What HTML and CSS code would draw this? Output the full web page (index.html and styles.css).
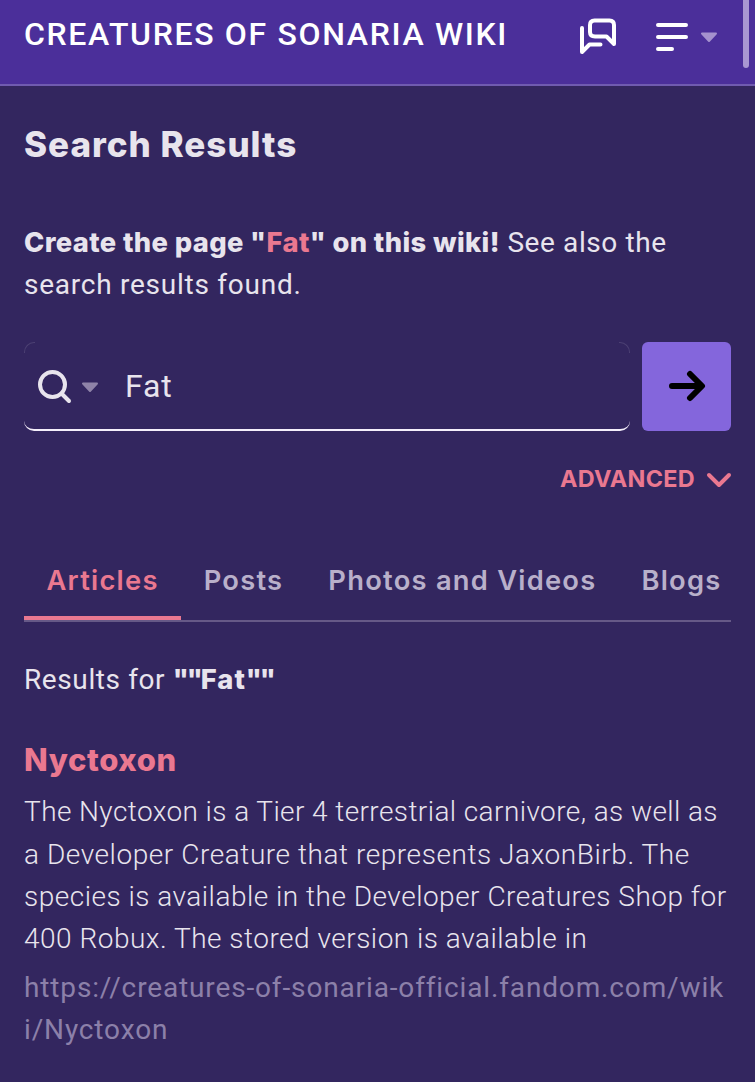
FILE: index.html
```html
<!DOCTYPE html>
<html lang="en">
<head>
    <meta charset="UTF-8">
    <meta name="viewport" content="width=device-width, initial-scale=1.0">
    <title>Search Results | Creatures of Sonaria Wiki</title>
    <link rel="stylesheet" href="styles.css">
</head>
<body>
    <header class="wiki-header">
        <a class="wiki-name" href="#">CREATURES OF SONARIA WIKI</a>
        <div class="wiki-tools">
            <svg class="icon-discuss" viewBox="0 0 38 38">
                <path d="M3 10V34L10.500 26.500H21.500"/>
                <path d="M15.500 2.500H30.500Q35 2.500 35 7V26L27.500 18.500H16Q11 18.500 11 14V7Q11 2.500 15.500 2.500Z"/>
            </svg>
            <svg class="icon-menu" viewBox="0 0 34 30">
                <path d="M3 3H31M3 15H31M3 27H17"/>
            </svg>
            <svg class="caret" viewBox="0 0 18 11">
                <path d="M2 1.500H16L9 9Z"/>
            </svg>
        </div>
        <div class="scroll-thumb"></div>
    </header>

    <main class="content">
        <h1>Search Results</h1>
        <p class="create-page">
            <span class="line line-create"><b>Create the page "<a href="#">Fat</a>" on this wiki!</b> See also the</span>
            <span class="line">search results found.</span>
        </p>

        <form class="search-form">
            <div class="search-box">
                <svg class="icon-search" viewBox="0 0 34 34">
                    <circle cx="14.500" cy="14.500" r="12.500"/>
                    <path d="M23.500 23.500L31 31"/>
                </svg>
                <svg class="caret" viewBox="0 0 18 11">
                    <path d="M2 1.500H16L9 9Z"/>
                </svg>
                <span class="search-text">Fat</span>
            </div>
            <button class="search-button" type="button" aria-label="Search">
                <svg viewBox="0 0 38 32">
                    <path d="M4 16H33M22 4L34 16L22 28"/>
                </svg>
            </button>
        </form>

        <a class="advanced" href="#">
            <span>ADVANCED</span>
            <svg viewBox="0 0 26 16">
                <path d="M3 3L13 13L23 3"/>
            </svg>
        </a>

        <nav class="tabs">
            <a class="tab active" href="#">Articles</a>
            <a class="tab" href="#">Posts</a>
            <a class="tab" href="#">Photos and Videos</a>
            <a class="tab" href="#">Blogs</a>
        </nav>

        <p class="results-for">Results for <b>""<span class="query">Fat</span>""</b></p>

        <article class="result">
            <h2><a href="#">Nyctoxon</a></h2>
            <p class="result-text">
                <span class="line line-1">The Nyctoxon is a Tier 4 terrestrial carnivore, as well as</span>
                <span class="line line-2">a Developer Creature that represents JaxonBirb. The</span>
                <span class="line">species is available in the Developer Creatures Shop for</span>
                <span class="line">400 Robux. The stored version is available in</span>
            </p>
            <a class="result-url" href="#">
                <span class="line">https://creatures-of-sonaria-official.fandom.com/wik</span>
                <span class="line">i/Nyctoxon</span>
            </a>
        </article>
    </main>
</body>
</html>
```
FILE: styles.css
```css
* {
    box-sizing: border-box;
}

body {
    margin: 0;
    height: 1082px;
    overflow: hidden;
    background-color: #33265f;
    color: #e8e4ed;
    font-family: Roboto, sans-serif;
    font-size: 28px;
    line-height: 42.3px;
}

a {
    color: #ea7890;
    text-decoration: none;
}

svg {
    display: block;
    flex: none;
    fill: none;
    stroke: currentColor;
    stroke-linecap: round;
    stroke-linejoin: round;
}

h1, h2, p {
    margin: 0;
}

h1, h2, b, .advanced, .tab {
    font-family: Inter, sans-serif;
}

b {
    font-size: 27.3px;
    font-weight: 800;
    line-height: 1;
}

.line {
    display: block;
    white-space: nowrap;
}

/* header */
.wiki-header {
    position: relative;
    display: flex;
    justify-content: space-between;
    height: 86px;
    padding: 13px 37px 0 24px;
    background-color: #4b2f9a;
    border-bottom: 2px solid #705bb0;
    color: #fff;
}

.wiki-name {
    color: #fff;
    font-size: 32px;
    font-weight: 500;
    letter-spacing: 1.65px;
    white-space: nowrap;
}

.wiki-tools {
    display: flex;
    align-items: center;
    height: 47px;
}

.icon-discuss {
    width: 38px;
    height: 38px;
    margin-right: 38px;
    stroke-width: 4;
}

.icon-menu {
    width: 34px;
    height: 30px;
    margin-right: 11px;
    stroke-width: 4;
}

.caret {
    width: 18px;
    height: 11px;
    color: #a592ce;
    fill: currentColor;
    stroke-width: 2;
}

.wiki-tools .caret {
    margin-top: 2px;
}

.scroll-thumb {
    position: absolute;
    top: 0;
    right: 6px;
    width: 6px;
    height: 68px;
    border-radius: 0 0 3px 3px;
    background-color: #a997d2;
}

/* page */
.content {
    padding: 36px 24px 0;
}

h1 {
    font-size: 35px;
    font-weight: 800;
    letter-spacing: 1px;
    line-height: 44px;
}

.create-page {
    margin-top: 56px;
    letter-spacing: 0.75px;
}

.line-create {
    letter-spacing: 0.6px;
}

.create-page b {
    letter-spacing: 0.38px;
}

.search-form {
    display: flex;
    gap: 12px;
    margin-top: 35.4px;
}

.search-box {
    position: relative;
    display: flex;
    align-items: center;
    flex: 1;
    height: 89px;
    padding: 2px 0 0 14px;
    border-bottom: 2px solid #f5effb;
    border-radius: 10px;
}

/* faint top corners of the field */
.search-box::before,
.search-box::after {
    content: "";
    position: absolute;
    top: 0;
    width: 10px;
    height: 10px;
    border-top: 1px solid #4c4073;
}

.search-box::before {
    left: 0;
    border-left: 1px solid #4c4073;
    border-top-left-radius: 10px;
}

.search-box::after {
    right: 0;
    border-right: 1px solid #4c4073;
    border-top-right-radius: 10px;
}

.icon-search {
    width: 34px;
    height: 34px;
    margin-top: 1px;
    stroke-width: 4;
}

.search-box .caret {
    margin: 2px 0 0 9px;
    color: #8f83a8;
}

.search-text {
    margin: -1px 0 0 26px;
    font-size: 32px;
    letter-spacing: 0.9px;
}

.search-button {
    display: flex;
    align-items: center;
    justify-content: center;
    width: 89px;
    height: 89px;
    padding: 0;
    border: 0;
    border-radius: 6px;
    background-color: #8466dc;
    color: #000;
}

.search-button svg {
    width: 38px;
    height: 32px;
    stroke-width: 6;
}

.advanced {
    display: flex;
    align-items: center;
    justify-content: flex-end;
    gap: 11px;
    height: 28px;
    margin-top: 34px;
    font-size: 23.4px;
    font-weight: 700;
    letter-spacing: 0.3px;
}

.advanced svg {
    width: 26px;
    height: 16px;
    margin: 2px -1px 0 0;
    stroke-width: 4;
}

.tabs {
    display: flex;
    height: 75px;
    margin-top: 54px;
    border-bottom: 2px solid #665987;
}

.tab {
    height: 73px;
    padding: 13px 22.5px 0;
    color: #b9b0ca;
    font-size: 27.3px;
    font-weight: 600;
    letter-spacing: 1.25px;
    white-space: nowrap;
}

.tab.active {
    border-bottom: 4px solid #ea7890;
    color: #ea7890;
}

.results-for {
    margin-top: 37px;
    letter-spacing: 0.6px;
}

.results-for b {
    letter-spacing: -2px;
}

.results-for .query {
    letter-spacing: 1px;
}

/* result */
.result {
    margin-top: 37px;
}

h2 {
    font-size: 31px;
    font-weight: 800;
    letter-spacing: 0.6px;
    line-height: 44px;
}

.result-text {
    margin-top: 9px;
    font-weight: 300;
    letter-spacing: 0.5px;
}

.line-1 {
    letter-spacing: 0.41px;
}

.line-2 {
    letter-spacing: 0.56px;
}

.result-url {
    display: block;
    margin-top: 6.4px;
    color: #8c80a9;
    letter-spacing: 0.86px;
}
```
